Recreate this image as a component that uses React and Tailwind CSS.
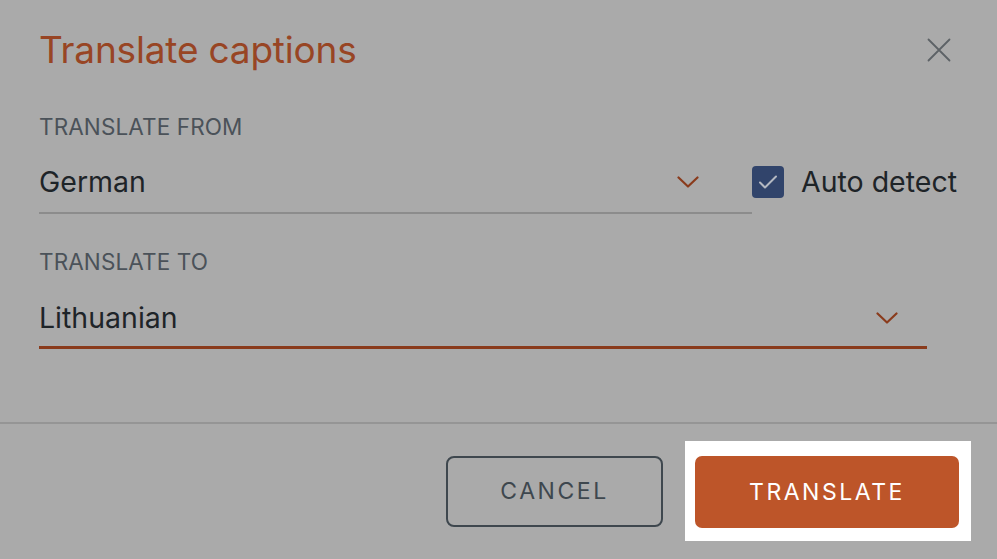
import React from "react";

function Chevron({ className }) {
  return (
    <svg className={className} width="22" height="12" viewBox="0 0 22 12" fill="none">
      <path d="M1.5 1.5 L11 10.5 L20.5 1.5" stroke="#8a3b1c" strokeWidth="2.2" strokeLinecap="round" strokeLinejoin="round" />
    </svg>
  );
}

export default function App() {
  return (
    <div
      className="relative w-[997px] h-[559px] overflow-hidden bg-[#aaaaaa] flex flex-col"
      style={{ fontFamily: "Inter, 'Noto Sans', sans-serif" }}
    >
      {/* Header */}
      <div className="flex items-center justify-between h-[40px] mt-[30px] pl-[39px] pr-[46px]">
        <h1 className="text-[37px] leading-[40px] text-[#984524] font-normal tracking-[-0.005em]">
          Translate captions
        </h1>
        <svg width="24" height="24" viewBox="0 0 24 24" fill="none">
          <path d="M1.5 1.5 L22.5 22.5 M22.5 1.5 L1.5 22.5" stroke="#5d6266" strokeWidth="1.8" strokeLinecap="round" />
        </svg>
      </div>

      {/* Body */}
      <div className="flex flex-col pl-[39px]">
        <div className="h-[24px] mt-[45px] flex items-center text-[22.5px] text-[#4b5259] tracking-[0.005em]">
          TRANSLATE FROM
        </div>
        <div className="flex items-start mt-[21px]">
          <div className="w-[713px] h-[54px] pb-[8px] border-b-2 border-[#8c8c8c] flex items-center justify-between pr-[53px]">
            <span className="text-[28.5px] text-[#1e2428]">German</span>
            <Chevron />
          </div>
          <div className="h-[44px] flex items-center ml-0">
            <div className="w-[32px] h-[32px] rounded-[4px] bg-[#31446b] flex items-center justify-center">
              <svg width="20" height="16" viewBox="0 0 20 16" fill="none">
                <path d="M2 8.5 L7 13.5 L18 2.5" stroke="#b4b9c2" strokeWidth="2" strokeLinecap="round" strokeLinejoin="round" />
              </svg>
            </div>
            <span className="ml-[17px] text-[28.5px] text-[#1e2428] whitespace-nowrap">Auto detect</span>
          </div>
        </div>
        <div className="h-[24px] mt-[36px] flex items-center text-[22.5px] text-[#4b5259] tracking-[0.005em]">
          TRANSLATE TO
        </div>
        <div className="w-[888px] h-[53px] mt-[22px] pb-[6px] border-b-[3px] border-[#8a3b1c] flex items-center justify-between pr-[29px]">
          <span className="text-[28.5px] text-[#1e2428]">Lithuanian</span>
          <Chevron />
        </div>
      </div>

      {/* Footer */}
      <div className="mt-[73px] border-t-2 border-[#959595] flex-1 flex justify-end items-start pt-[17px] pr-[26px]">
        <div className="flex items-center">
          <button className="w-[217px] h-[71px] mr-[22px] border-2 border-[#3e474e] rounded-[8px] flex items-center justify-center text-[23px] tracking-[0.11em] text-[#3e474e]">
            CANCEL
          </button>
          <div className="bg-white pl-[10px] pr-[12px] pt-[15px] pb-[13px]">
            <button className="w-[264px] h-[72px] rounded-[7px] bg-[#bd5529] flex items-center justify-center text-[23px] tracking-[0.11em] text-white">
              TRANSLATE
            </button>
          </div>
        </div>
      </div>
    </div>
  );
}
